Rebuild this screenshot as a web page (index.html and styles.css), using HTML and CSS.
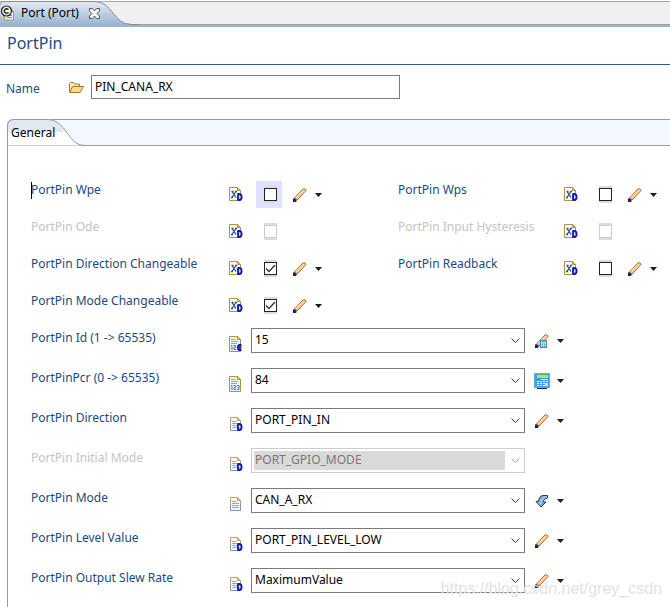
FILE: index.html
```html
<!DOCTYPE html>
<html lang="en">

<head>
  <meta charset="UTF-8" />
  <title>Port (Port)</title>
  <link rel="stylesheet" href="styles.css">
</head>

<body>
  <!-- Icon sprite -->
  <svg class="sprite" aria-hidden="true">
    <linearGradient id="editor-tab-fill" x1="0" y1="0" x2="0" y2="1">
      <stop offset="0" stop-color="#e4ebf3" />
      <stop offset="1" stop-color="#99b4d1" />
    </linearGradient>
    <linearGradient id="arrow-fill" x1="0" y1="0" x2="1" y2="1">
      <stop offset="0" stop-color="#3a6ea5" />
      <stop offset="0.5" stop-color="#a9c8e6" />
      <stop offset="1" stop-color="#2a5a94" />
    </linearGradient>
    <symbol id="page" viewBox="0 0 16 16">
      <path d="M2.5 1.5h7l3 3v10h-10z" fill="#f4f8fd" stroke="#b9a265" />
      <path d="M2.5 8v6.500h10V8" fill="none" stroke="#7d93b8" />
      <path d="M9.500 1.500v3h3z" fill="#e9c878" stroke="#c9a456" />
    </symbol>
    <symbol id="letter-d" viewBox="0 0 16 16">
      <path d="M9.500 8h1.500c3.500 0 3.500 6 0 6h-1.500M10 8v6" fill="#cfdcf8" stroke="#1018b4" stroke-width="1.800" />
    </symbol>
    <symbol id="var" viewBox="0 0 16 16">
      <path d="M1.500 1.500h8l3 3v10h-11z" fill="#f7fafd" stroke="#b5913c" />
      <path d="M9.500 1.500v3h3z" fill="#e9c878" stroke="#b5913c" />
      <path d="M4 5.500l4 6M8 5.500l-4 6M3.500 5.500h2M7 5.500h2M3 11.500h2" fill="none" stroke="#2d5478" stroke-width="1.300" />
      <use href="#letter-d" />
    </symbol>
    <symbol id="lines" viewBox="0 0 16 16">
      <use href="#page" />
      <path d="M4 5.500h4M4 7.500h7M4 9.500h7M4 11.500h7" stroke="#8ba6cf" />
    </symbol>
    <symbol id="lines-d" viewBox="0 0 16 16">
      <use href="#lines" />
      <use href="#letter-d" />
    </symbol>
    <symbol id="number" viewBox="0 0 16 16">
      <path d="M1.500 0.500h8l3 3v12h-11z" fill="#f4f8fd" stroke="#b5913c" />
      <path d="M9.500 0.500v3h3z" fill="#e9c878" stroke="#b5913c" />
      <path d="M3 3.500h5M3 5.500h7M3 7.500h6" stroke="#8ba6cf" />
      <path d="M3 9.500h1v4.500M5.500 9.500h2v2h-1.500v2h2M9 9.500h2v4h-2M9.500 11.500h1" fill="none" stroke="#4a72a8" />
    </symbol>
    <symbol id="number-c" viewBox="0 0 16 16">
      <use href="#number" />
      <path d="M13.500 9h-2.500q-2 2.500 0 5h2.500M9 11.500h4.500" fill="none" stroke="#1018b4" stroke-width="1.800" />
    </symbol>
    <symbol id="pencil" viewBox="0 0 16 16">
      <path d="M2 11.500L11 2q2.500-1 3 1.500L5 13z" fill="#f7bf78" stroke="#a8602a" />
      <path d="M4.500 11L12.500 3" stroke="#fbd093" stroke-width="2" />
      <path d="M4 10.500L12 2.500" stroke="#ffe4b0" />
      <path d="M1 15v-3.500h2l1.500 1.500v1.500l-1 .5z" fill="#14206e" />
    </symbol>
    <symbol id="pencil-calc" viewBox="0 0 16 16">
      <use href="#pencil" />
      <rect x="6.500" y="7.500" width="6" height="7" fill="#a9dcf5" stroke="#3f83c4" />
      <path d="M8 9h3" stroke="#8fc45c" stroke-width="1.500" />
      <path d="M8 11.500h3M8 13.500h3" stroke="#4a90cc" stroke-dasharray="1 1" />
    </symbol>
    <symbol id="calc" viewBox="0 0 16 16">
      <path d="M3 15h10v1H3z" fill="#0c2a50" />
      <rect x="0.500" y="0.500" width="15" height="14" fill="#3fa2ec" stroke="#5aaeea" />
      <rect x="3" y="2" width="11" height="3" fill="#a6e087" />
      <path d="M3 1.500h11" stroke="#5bb35a" />
      <path d="M3 6.500h3" stroke="#e0532e" />
      <path d="M7 6.500h7" stroke="#cde9fa" />
      <path d="M3 8.500h11M3 10.500h8M3 12.500h8" stroke="#fff" stroke-dasharray="2 1" />
      <path d="M12.500 10v3" stroke="#fff" stroke-width="2" />
    </symbol>
    <symbol id="reload" viewBox="0 0 16 16">
      <path d="M13.500 2.500h-4.500q-4 .5-4.500 6h-2.500l5 5.500 5-5h-2.500q-.5-2 1.500-3l2.500-1z" fill="url(#arrow-fill)" stroke="#173c6b" />
    </symbol>
    <symbol id="caret" viewBox="0 0 7 4">
      <path d="M0 0h7L3.500 4z" fill="#1c1c1c" />
    </symbol>
  </svg>

  <!-- Editor tab -->
  <header class="editor-bar">
    <div class="editor-tab">
      <svg class="tab-shape" viewBox="0 0 140 24">
        <path d="M-1 24V4q1-3 4-3.500H94C114 .5 112 23.500 132 23.500V24z" fill="url(#editor-tab-fill)" />
        <path d="M-.5 5Q0 .5 5 .5H94C114 .5 112 23.500 132 23.500H140" fill="none" stroke="#8c8c8c" />
      </svg>
      <svg class="icon" viewBox="0 0 16 16">
        <path d="M4.500 3.500h6l3 3v8.500h-9z" fill="#f6f8fb" stroke="#b5913c" />
        <path d="M10.500 3.500v3h3z" fill="#e9c878" stroke="#b5913c" />
        <path d="M9 10.500h3M7 12.500h5" stroke="#5d82b8" />
        <circle cx="6.500" cy="6" r="5" fill="#f1f1f1" stroke="#222" stroke-width="1.200" />
        <path d="M8.500 4.500q-2-1.500-3.500 0t0 3q1.500 1.500 3.500 0" fill="none" stroke="#222" stroke-width="1.300" />
      </svg>
      <span>Port (Port)</span>
      <button class="close" aria-label="Close">
        <svg viewBox="0 0 11 11">
          <path d="M.5 .5h3l2 2.500 2-2.500h3v2.500l-2.500 2.500 2.500 2.500v2.500h-3l-2-2.500-2 2.500h-3v-2.500l2.500-2.500-2.500-2.500z" fill="#fff" stroke="#555" />
        </svg>
      </button>
    </div>
  </header>

  <h1>PortPin</h1>

  <div class="name-row">
    <label for="name">Name</label>
    <svg class="icon" viewBox="0 0 16 16">
      <path d="M1.500 12.500v-8l1-1h3l1 1.500h5v2.500" fill="#fdf0c0" stroke="#a87528" />
      <path d="M1.500 13.500l3-6h11l-3.500 6z" fill="#fbd98a" stroke="#a87528" />
    </svg>
    <input type="text" id="name" value="PIN_CANA_RX" />
  </div>

  <main class="panel">
    <div class="panel-bar">
      <svg class="panel-shape" viewBox="0 0 90 27">
        <path d="M0 13V6L5 .5H40C60 .5 60 26.500 78 26.500H0z" fill="#fff" />
        <path d="M0 13V6L5 .5H40C50 .5 54 7 58 13z" fill="#e1e8f1" />
        <path d="M.5 27V7Q.5 .5 7 .5H40C60 .5 60 26.500 78 26.500H90" fill="none" stroke="#999" />
      </svg>
      <h2>General</h2>
    </div>

    <form class="form">
      <!-- Flags -->
      <div class="checks">
        <div class="check-row">
          <label class="active" for="wpe">PortPin Wpe</label>
          <svg class="icon"><use href="#var" /></svg>
          <span class="tick focus"><input type="checkbox" id="wpe" /></span>
          <button type="button" class="edit" aria-label="Edit Wpe"><svg class="icon"><use href="#pencil" /></svg><svg class="caret"><use href="#caret" /></svg></button>
        </div>
        <div class="check-row">
          <label for="wps">PortPin Wps</label>
          <svg class="icon"><use href="#var" /></svg>
          <span class="tick"><input type="checkbox" id="wps" /></span>
          <button type="button" class="edit" aria-label="Edit Wps"><svg class="icon"><use href="#pencil" /></svg><svg class="caret"><use href="#caret" /></svg></button>
        </div>
        <div class="check-row disabled">
          <label for="ode">PortPin Ode</label>
          <svg class="icon"><use href="#var" /></svg>
          <span class="tick"><input type="checkbox" id="ode" disabled /></span>
        </div>
        <div class="check-row disabled">
          <label for="hysteresis">PortPin Input Hysteresis</label>
          <svg class="icon"><use href="#var" /></svg>
          <span class="tick"><input type="checkbox" id="hysteresis" disabled /></span>
        </div>
        <div class="check-row">
          <label for="dir-change">PortPin Direction Changeable</label>
          <svg class="icon"><use href="#var" /></svg>
          <span class="tick"><input type="checkbox" id="dir-change" checked /></span>
          <button type="button" class="edit" aria-label="Edit Direction Changeable"><svg class="icon"><use href="#pencil" /></svg><svg class="caret"><use href="#caret" /></svg></button>
        </div>
        <div class="check-row">
          <label for="readback">PortPin Readback</label>
          <svg class="icon"><use href="#var" /></svg>
          <span class="tick"><input type="checkbox" id="readback" /></span>
          <button type="button" class="edit" aria-label="Edit Readback"><svg class="icon"><use href="#pencil" /></svg><svg class="caret"><use href="#caret" /></svg></button>
        </div>
        <div class="check-row">
          <label for="mode-change">PortPin Mode Changeable</label>
          <svg class="icon"><use href="#var" /></svg>
          <span class="tick"><input type="checkbox" id="mode-change" checked /></span>
          <button type="button" class="edit" aria-label="Edit Mode Changeable"><svg class="icon"><use href="#pencil" /></svg><svg class="caret"><use href="#caret" /></svg></button>
        </div>
      </div>

      <!-- Values -->
      <div class="fields">
        <div class="field-row">
          <label for="pin-id">PortPin Id (1 -&gt; 65535)</label>
          <svg class="icon"><use href="#number-c" /></svg>
          <select id="pin-id"><option>15</option></select>
          <button type="button" class="edit" aria-label="Edit Id"><svg class="icon"><use href="#pencil-calc" /></svg><svg class="caret"><use href="#caret" /></svg></button>
        </div>
        <div class="field-row">
          <label for="pcr">PortPinPcr (0 -&gt; 65535)</label>
          <svg class="icon"><use href="#number" /></svg>
          <select id="pcr"><option>84</option></select>
          <button type="button" class="edit" aria-label="Calculate Pcr"><svg class="icon"><use href="#calc" /></svg><svg class="caret"><use href="#caret" /></svg></button>
        </div>
        <div class="field-row">
          <label for="direction">PortPin Direction</label>
          <svg class="icon"><use href="#lines-d" /></svg>
          <select id="direction"><option>PORT_PIN_IN</option></select>
          <button type="button" class="edit" aria-label="Edit Direction"><svg class="icon"><use href="#pencil" /></svg><svg class="caret"><use href="#caret" /></svg></button>
        </div>
        <div class="field-row disabled">
          <label for="initial-mode">PortPin Initial Mode</label>
          <svg class="icon"><use href="#lines-d" /></svg>
          <select id="initial-mode" disabled><option>PORT_GPIO_MODE</option></select>
        </div>
        <div class="field-row">
          <label for="mode">PortPin Mode</label>
          <svg class="icon"><use href="#lines" /></svg>
          <select id="mode"><option>CAN_A_RX</option></select>
          <button type="button" class="edit" aria-label="Reload Mode"><svg class="icon"><use href="#reload" /></svg><svg class="caret"><use href="#caret" /></svg></button>
        </div>
        <div class="field-row">
          <label for="level">PortPin Level Value</label>
          <svg class="icon"><use href="#lines-d" /></svg>
          <select id="level"><option>PORT_PIN_LEVEL_LOW</option></select>
          <button type="button" class="edit" aria-label="Edit Level Value"><svg class="icon"><use href="#pencil" /></svg><svg class="caret"><use href="#caret" /></svg></button>
        </div>
        <div class="field-row">
          <label for="slew">PortPin Output Slew Rate</label>
          <svg class="icon"><use href="#lines-d" /></svg>
          <select id="slew"><option>MaximumValue</option></select>
          <button type="button" class="edit" aria-label="Edit Output Slew Rate"><svg class="icon"><use href="#pencil" /></svg><svg class="caret"><use href="#caret" /></svg></button>
        </div>
      </div>
    </form>
  </main>

  <div class="watermark">https://blog.csdn.net/grey_csdn</div>
</body>

</html>
```
FILE: styles.css
```css
:root {
  --navy: #1b4a80;
  --disabled: #c4c4c4;
  --line: #999;
}

* {
  box-sizing: border-box;
}

body {
  font-family: "Noto Sans", "Open Sans", sans-serif;
  font-size: 12px;
  line-height: 18px;
  color: #000;
  background: #fff;
  margin: 0;
  min-height: 100vh;
  display: flex;
  flex-direction: column;
  position: relative;
}

.sprite {
  position: absolute;
  width: 0;
  height: 0;
}

.icon {
  width: 16px;
  height: 16px;
  flex: none;
}

button {
  padding: 0;
  border: none;
  background: none;
  display: flex;
  align-items: center;
  cursor: pointer;
}

/* Editor tab */
.editor-bar {
  padding-top: 1px;
  background: #f0f0f0;
  border-bottom: 2px solid #99b4d1;
  box-shadow: inset 0 1px #fff, inset 0 2px #a8a8a8, inset 0 -1px #a0a0a0;
}

.editor-tab {
  position: relative;
  height: 24px;
  display: flex;
  align-items: center;
  gap: 5px;
}

.editor-tab > * {
  position: relative;
}

.editor-tab .tab-shape {
  position: absolute;
  left: 0;
  top: 0;
  width: 140px;
  height: 24px;
}

.close {
  margin-left: 5px;
}

.close svg {
  width: 11px;
  height: 11px;
}

h1 {
  margin: 0;
  padding: 4px 7px 9px;
  font-size: 16px;
  font-weight: 400;
  line-height: 24px;
  color: var(--navy);
  border-bottom: 1px solid #2a5a94;
}

.name-row {
  display: flex;
  align-items: center;
  padding: 10px 6px 0;
}

.name-row label {
  width: 62px;
  padding-top: 4px;
  color: var(--navy);
}

.name-row input {
  width: 309px;
  height: 24px;
  margin-left: 7px;
  padding: 0 3px 1px;
  font: inherit;
  border: 1px solid #7a7a7a;
}

/* General panel */
.panel {
  flex: 1;
  margin: 20px 0 0 7px;
  border-left: 1px solid var(--line);
  border-top-left-radius: 7px;
}

.panel-bar {
  position: relative;
  height: 27px;
  margin-left: -1px;
  background: #f3f8fe;
  border-top: 1px solid var(--line);
  border-bottom: 1px solid var(--line);
  border-top-left-radius: 7px;
}

.panel-shape {
  position: absolute;
  left: 0;
  top: -1px;
  width: 90px;
  height: 27px;
}

h2 {
  position: relative;
  margin: 0;
  padding: 4px;
  font-size: 12px;
  font-weight: 400;
  line-height: 18px;
}

.form {
  padding: 35px 0 0 23px;
  color: var(--navy);
}

.disabled {
  color: var(--disabled);
}

.checks {
  display: grid;
  grid-template-columns: 367fr 272fr;
  row-gap: 10px;
}

.check-row {
  display: flex;
  align-items: center;
  height: 27px;
}

.check-row label {
  position: relative;
  width: 197px;
  padding-bottom: 9px;
}

.check-row:nth-child(even) label {
  width: 165px;
}

.check-row > .icon {
  margin-bottom: 2px;
}

/* text cursor in front of the focused label */
.active::before {
  content: "";
  position: absolute;
  left: 0;
  top: 1px;
  width: 1px;
  height: 17px;
  background: #000;
}

.tick {
  display: flex;
  align-items: center;
  justify-content: center;
  width: 26px;
  height: 27px;
  margin: 0 10px 0 12px;
  padding-left: 2px;
}

.focus {
  background: #e0e0ff;
}

.tick input {
  appearance: none;
  width: 13px;
  height: 13px;
  margin: 0;
  border: 1px solid #222;
  background: #fff;
  box-shadow: 0 -2px #dcdcdc, 0 2px #dcdcdc;
}

.tick input:checked {
  background: #fff url("data:image/svg+xml,%3Csvg xmlns='http://www.w3.org/2000/svg' viewBox='0 0 11 11'%3E%3Cpath d='M1 5.500l3 3L10 2' fill='none' stroke='%23333' stroke-width='1.300'/%3E%3C/svg%3E");
}

.tick input:disabled {
  border-color: #ccc;
}

.edit {
  gap: 7px;
}

.caret {
  width: 7px;
  height: 4px;
}

.fields {
  display: grid;
  row-gap: 15px;
  padding: 9px 105px 12px 0;
}

.field-row {
  display: grid;
  grid-template-columns: 197px 16px minmax(0, 1fr) 31px;
  align-items: center;
  height: 25px;
}

.field-row label {
  padding-bottom: 6px;
}

.field-row > .icon {
  margin-top: 6px;
}

.field-row select {
  appearance: none;
  height: 25px;
  margin: 0 9px 0 7px;
  padding: 0 24px 1px 3px;
  font: inherit;
  color: #000;
  border: 1px solid #7a7a7a;
  border-radius: 0;
  background: #fff url("data:image/svg+xml,%3Csvg xmlns='http://www.w3.org/2000/svg' viewBox='0 0 9 6'%3E%3Cpath d='M.5 .5l4 4 4-4' fill='none' stroke='%23444'/%3E%3C/svg%3E") no-repeat right 4px center / 9px 6px;
}

.field-row select:disabled {
  color: #777;
  opacity: 1;
  border-color: #ccc;
  background:
    url("data:image/svg+xml,%3Csvg xmlns='http://www.w3.org/2000/svg' viewBox='0 0 9 6'%3E%3Cpath d='M.5 .5l4 4 4-4' fill='none' stroke='%23aaa'/%3E%3C/svg%3E") no-repeat right 4px center / 9px 6px,
    linear-gradient(#dadada, #dadada) no-repeat 2px 2px / calc(100% - 21px) 19px,
    #fff;
}

.watermark {
  position: absolute;
  right: 8px;
  bottom: 8px;
  font-family: "Liberation Sans", Arial, sans-serif;
  font-size: 16px;
  line-height: 20px;
  color: #e2e2e2;
}
```
